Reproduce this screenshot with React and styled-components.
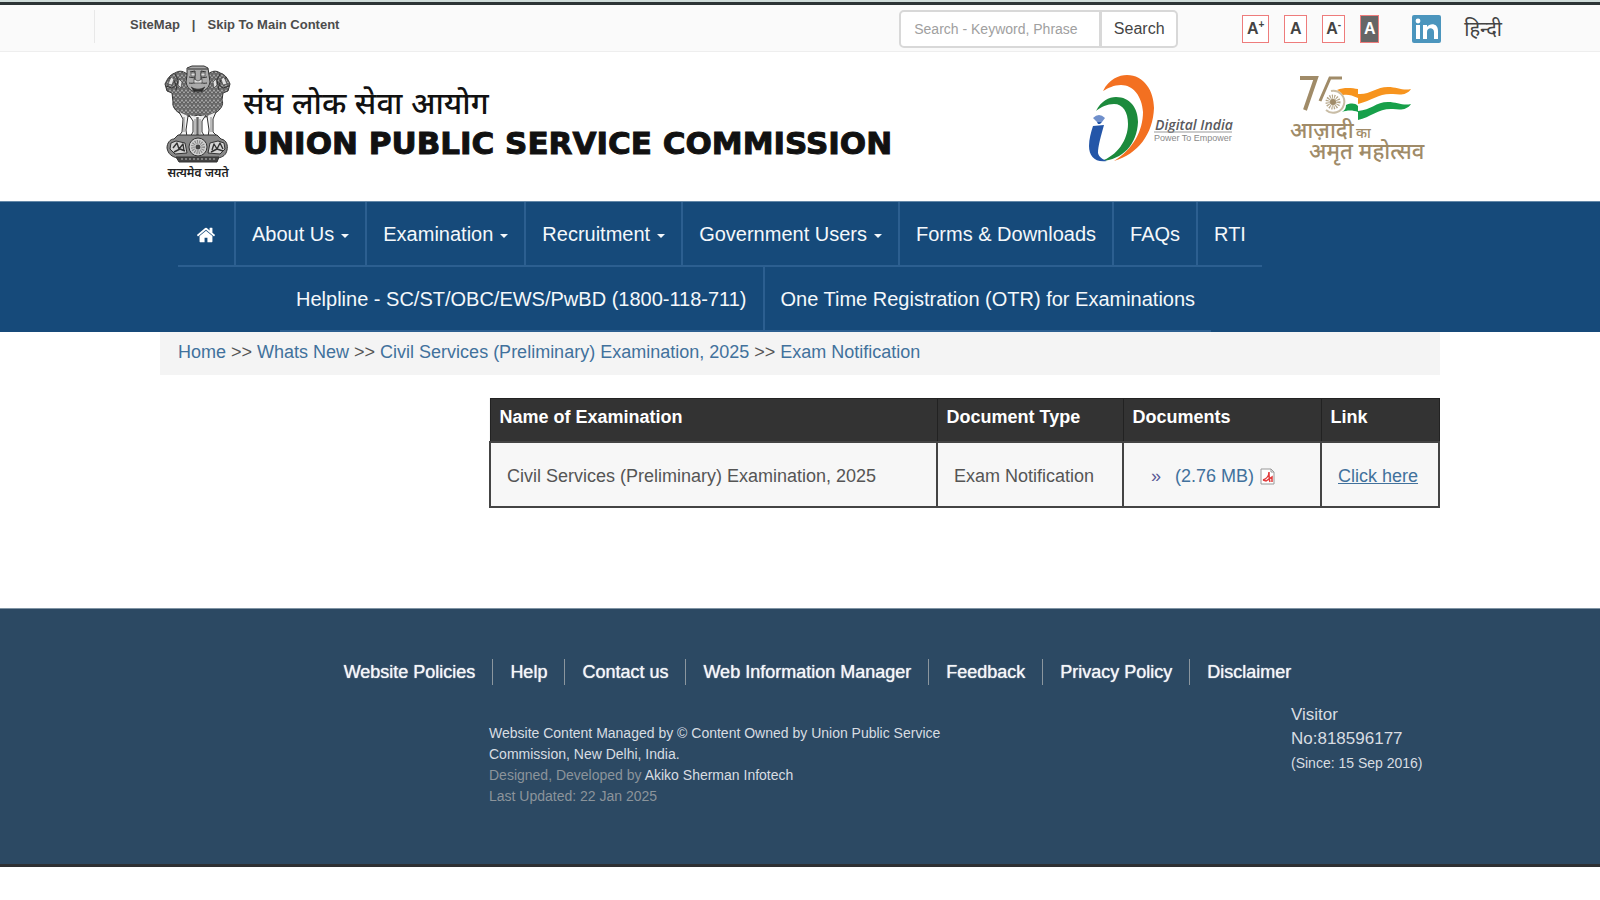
import { useState } from "react";
import styled, { createGlobalStyle } from "styled-components";

const menu = [
    { label: 'About Us', dropdown: true },
    { label: 'Examination', dropdown: true },
    { label: 'Recruitment', dropdown: true },
    { label: 'Government Users', dropdown: true },
    { label: 'Forms & Downloads' },
    { label: 'FAQs' },
    { label: 'RTI' },
];

const subMenu = [
    'Helpline - SC/ST/OBC/EWS/PwBD (1800-118-711)',
    'One Time Registration (OTR) for Examinations',
];

const crumbs = ['Home', 'Whats New', 'Civil Services (Preliminary) Examination, 2025', 'Exam Notification'];

const footerLinks = ['Website Policies', 'Help', 'Contact us', 'Web Information Manager', 'Feedback', 'Privacy Policy', 'Disclaimer'];

const Emblem = () => (
    <svg width="67" height="115" viewBox="0 0 67 115" role="img" aria-label="State Emblem of India">
        <defs>
            <pattern id="fur" width="4" height="5" patternUnits="userSpaceOnUse">
                <rect width="4" height="5" fill="#a2a2a2" />
                <path d="M0 0l2 3 2-3M2 3v2M0 5l1-2M4 5l-1-2" stroke="#333" strokeWidth=".7" fill="none" />
            </pattern>
        </defs>
        <g stroke="#333" strokeWidth="1" strokeLinejoin="round">
            <path d="M23 9C18 5 14 6 11 8C5 10 3 15 1 19L3 26L8 28L9 37C8 41 11 46 17 49L27 52L34 50L42 52L51 48C57 45 60 39 58 35L59 28L64 26L66 19C64 14 61 9 56 8C52 5 48 6 44 9Z" fill="url(#fur)" />
            <path d="M23 3L28 1H40L44 3L45 10L46 17C45 23 41 27 34 27C27 27 23 23 22 17L23 10Z" fill="#aaa" />
            <path d="M24 4h20M26 7l5-1M37 6l5 1M25 12l6 1M37 13l6-1M31 6v9l3 2 3-2V6M25 18c5 1 6-1 9-1s4 2 9 1M27 22c4 3 10 3 14 0" fill="none" />
            <path d="M30 14l4 2 4-2v4h-8zM27 8h4v3h-4zM37 8h4v3h-4z" fill="#ddd" strokeWidth=".6" />
            <path d="M28 23q6 4 12 0l-2 3h-8z" fill="#222" />
            <path d="M5 13l5 2 2 5-4 3-6-2M11 9l3 6-2 10M62 13l-5 2-2 5 4 3 6-2M56 9l-3 6 2 10" fill="none" />
            <path d="M7 12l3 2-2 6-4-1zM15 14l3 3-1 6-3-3zM60 12l-3 2 2 6 4-1zM52 14l-3 3 1 6 3-3z" fill="#e2e2e2" strokeWidth=".6" />
            <path d="M15 47L19 54L18 67L14 72H23L22 65L24 51M25 50L29 56V67L26 72H33V52M34 52V72H41L38 67V56L42 50M43 51L45 65L44 72H54L49 67V54L52 47" fill="#eee" />
            <path d="M20 52v15M31 54v15M36 54v15M47 52v15" stroke="#888" fill="none" />
            <path d="M14 70h39l4 4c6 1 7 7 6 11-1 5-4 7-9 8H14C8 92 4 89 3 83c0-5 3-9 7-9z" fill="#888" />
            <path d="M7 78l5-2 9 2 2 10-12 1-5-5zM60 78l-6-2-8 2-2 10 12 1 5-5z" fill="#d4d4d4" />
            <path d="M9 83l4-5 2 6 4-5 1 7M48 85l2-6 3 5 3-6 3 6M10 87l6-3 5 2M47 87l6-3 6 2" fill="none" strokeWidth="1.4" />
            <circle cx="34" cy="82" r="9" fill="#d0d0d0" />
            <circle cx="34" cy="82" r="5" fill="none" strokeDasharray="1 1" strokeWidth="4" stroke="#888" />
            <circle cx="34" cy="82" r="2" fill="#444" />
            <path d="M12 92h43l-2 5H15z" fill="#444" />
            <path d="M17 94h34" stroke="#bbb" strokeDasharray="2 2" />
        </g>
        <text x="34" y="112" textAnchor="middle" fontSize="12" fontWeight="600" fill="#222">सत्यमेव जयते</text>
    </svg>
);

const DigitalIndia = () => (
    <svg width="145" height="90" viewBox="0 0 145 90" role="img" aria-label="Digital India">
        <path d="M14 17C20 5 30 1 38 1C55 1 65 17 65 34C64 60 49 80 25 87C44 75 54 57 54 38C53 22 44 11 32 11C25 11 19 14 14 17Z" fill="#f37021" />
        <path d="M7 37C12 27 20 23 27 23C41 23 49 34 49 48C48 70 34 86 12 87C28 82 39 66 39 50C39 38 34 30 25 30C18 30 12 33 7 37Z" fill="#1c8a3c" />
        <path d="M4 52L15 51C12 62 9 72 9 79C10 83 13 85 18 87C6 89 0 82 0 72C0 65 2 58 4 52Z" fill="#2456a8" />
        <path d="M4 44Q10 38 16 44L13 48H8Z" fill="#6f8fcb" />
        <path d="M8 48h5l-2 2H9Z" fill="#2456a8" />
        <text x="66" y="56" fontSize="14" fontWeight="600" fontStyle="italic" fontFamily="Open Sans, sans-serif" fill="#5a5a5e">Digital India</text>
        <path d="M65 58H143" stroke="#999" strokeWidth="1" />
        <text x="65" y="67" fontSize="9" fontFamily="Liberation Sans, sans-serif" fill="#8a8a8a">Power To Empower</text>
    </svg>
);

const AzadiLogo = () => (
    <svg width="140" height="96" viewBox="0 0 140 96" role="img" aria-label="Azadi Ka Amrit Mahotsav">
        <g fill="none" stroke="#a08b68">
            <path d="M11 4H27L16 36" strokeWidth="4" />
            <path d="M53 4H41L31 27" strokeWidth="3" />
            <path d="M42 17A11 11 0 1 1 37 36" strokeWidth="2" stroke="#c9bda6" />
            <circle cx="44" cy="28" r="5" strokeWidth="5" strokeDasharray="1 1" stroke="#b5a689" />
            <circle cx="44" cy="28" r="3" fill="#a08b68" stroke="none" />
        </g>
        <path d="M48 16C55 13 63 14 69 15V24C63 21 58 20 54 21C52 18 50 17 48 16Z" fill="#f7941e" />
        <path d="M69 20C81 21 87 13 99 13C108 13 114 17 122 15C118 21 112 21 104 20C90 19 84 26 69 30Z" fill="#f7941e" />
        <path d="M57 31C62 29 66 29 69 32V38C64 36 58 36 53 38C56 36 57 34 57 31Z" fill="#17a04a" />
        <path d="M69 37C82 36 87 28 99 28C108 28 114 32 122 30C118 36 112 36 104 35C90 34 82 43 69 46Z" fill="#17a04a" />
        <g fill="#a08b68" fontWeight="500">
            <text x="1" y="64" fontSize="22">आज़ादी</text>
            <text x="67" y="64" fontSize="14">का</text>
            <text x="20" y="85" fontSize="22">अमृत महोत्सव</text>
        </g>
    </svg>
);

const HomeIcon = () => (
    <svg width="20" height="20" viewBox="0 0 1792 1792" fill="#fff" aria-hidden="true">
        <path d="M1472 992v480q0 26-19 45t-45 19h-384v-384h-256v384h-384q-26 0-45-19t-19-45v-480q0-1 .5-3t.5-3l575-474 575 474q1 2 1 6zm223-69l-62 74q-8 9-21 11h-3q-13 0-21-7l-692-577-692 577q-12 8-24 7-13-2-21-11l-62-74q-8-10-7-23.500t11-21.500l719-599q32-26 76-26t76 26l244 204v-195q0-14 9-23t23-9h192q14 0 23 9t9 23v408l219 182q10 8 11 21.500t-7 23.500z" />
    </svg>
);

const LinkedIn = () => (
    <svg width="29" height="28" viewBox="0 0 29 28" aria-hidden="true">
        <rect width="29" height="28" rx="2" fill="#4b95bd" />
        <path d="M4 10H8V24H4Z M11 10H15V12C18 8 26 8 26 16V24H22V17C22 12 15 12 15 17V24H11Z" fill="#fff" />
        <circle cx="6" cy="6" r="2.400" fill="#fff" />
    </svg>
);

const PdfIcon = () => (
    <svg width="15" height="17" viewBox="0 0 15 17" aria-hidden="true">
        <path d="M1 1H11L14 4V16H1Z" fill="#fff" stroke="#999" />
        <path d="M11 1V4H14" fill="none" stroke="#999" />
        <path d="M3 12C6 11 9 8 9 4M9 4C9 8 9 11 10 14M3 12L6 13L12 9V14" fill="none" stroke="#e23b3b" strokeWidth="1.5" />
    </svg>
);

const App = () => {
    const [keyword, setKeyword] = useState('');

    return (
        <>
            <GlobalStyle />
            <TopBar>
                <SkipLinks>
                    <a href="#sitemap">SiteMap</a>
                    <span>|</span>
                    <a href="#main">Skip To Main Content</a>
                </SkipLinks>
                <Tools>
                    <SearchForm onSubmit={(e) => e.preventDefault()}>
                        <input
                            type="text"
                            aria-label="Search"
                            placeholder="Search - Keyword, Phrase"
                            value={keyword}
                            onChange={(e) => setKeyword(e.target.value)}
                        />
                        <button type="submit">Search</button>
                    </SearchForm>
                    <TextSizes>
                        <SizeButton $width={27} aria-label="Increase text size">A<sup>+</sup></SizeButton>
                        <SizeButton $width={23} aria-label="Normal text size">A</SizeButton>
                        <SizeButton $width={23} aria-label="Decrease text size">A<sup>-</sup></SizeButton>
                        <SizeButton $width={19} $dark aria-label="High contrast">A</SizeButton>
                    </TextSizes>
                    <SocialLink href="#linkedin" aria-label="LinkedIn"><LinkedIn /></SocialLink>
                    <Language href="#hi" lang="hi">हिन्दी</Language>
                </Tools>
            </TopBar>

            <Header>
                <Brand href="#home">
                    <Emblem />
                    <div>
                        <HindiName lang="hi">संघ लोक सेवा आयोग</HindiName>
                        <EnglishName>UNION PUBLIC SERVICE COMMISSION</EnglishName>
                    </div>
                </Brand>
                <Partners>
                    <DigitalIndia />
                    <AzadiLogo />
                </Partners>
            </Header>

            <Nav>
                <Container>
                    <MenuRow>
                        <li><HomeLink href="#home" aria-label="Home"><HomeIcon /></HomeLink></li>
                        {menu.map((item) => (
                            <li key={item.label}>
                                <MenuLink href="#menu">{item.label}{item.dropdown && <Caret />}</MenuLink>
                            </li>
                        ))}
                    </MenuRow>
                    <MenuRow $sub>
                        {subMenu.map((label) => <li key={label}><MenuLink href="#menu">{label}</MenuLink></li>)}
                    </MenuRow>
                </Container>
            </Nav>

            <Main id="main">
                <Breadcrumb aria-label="Breadcrumb">
                    {crumbs.map((crumb, i) => (
                        <span key={crumb}>{i > 0 && ' >> '}<a href="#crumb">{crumb}</a></span>
                    ))}
                </Breadcrumb>
                <ExamTable>
                    <colgroup>
                        <col />
                        <col width="186" />
                        <col width="198" />
                        <col width="118" />
                    </colgroup>
                    <thead>
                        <tr>
                            <th>Name of Examination</th>
                            <th>Document Type</th>
                            <th>Documents</th>
                            <th>Link</th>
                        </tr>
                    </thead>
                    <tbody>
                        <tr>
                            <td>Civil Services (Preliminary) Examination, 2025</td>
                            <td>Exam Notification</td>
                            <td>
                                <Document><Marker>»</Marker><a href="#pdf">(2.76 MB) <PdfIcon /></a></Document>
                            </td>
                            <td><ClickHere href="#apply">Click here</ClickHere></td>
                        </tr>
                    </tbody>
                </ExamTable>
            </Main>

            <Footer>
                <FooterLinks>
                    {footerLinks.map((label) => <li key={label}><a href="#footer">{label}</a></li>)}
                </FooterLinks>
                <FooterInfo>
                    <Credits>
                        <p>Website Content Managed by © Content Owned by Union Public Service Commission, New Delhi, India.</p>
                        <Muted>Designed, Developed by <a href="#developer">Akiko Sherman Infotech</a></Muted>
                        <Muted>Last Updated: 22 Jan 2025</Muted>
                    </Credits>
                    <Visitors>
                        <p>Visitor<br />No:818596177</p>
                        <small>(Since: 15 Sep 2016)</small>
                    </Visitors>
                </FooterInfo>
            </Footer>
        </>
    )
}

const GlobalStyle = createGlobalStyle`
    *{
        box-sizing: border-box;
    }
    body{
        margin: 0;
        background: #fff;
        color: #555;
        font-family: "Liberation Sans", "Noto Sans", Arial, sans-serif;
        font-size: 18px;
    }
    a{
        color: #41719c;
        text-decoration: none;
    }
    p, ul{
        margin: 0;
        padding: 0;
    }
    ul{
        list-style: none;
    }
    svg{
        flex-shrink: 0;
    }
`;

const Container = styled.div`
    max-width: 1280px;
    margin: 0 auto;
`;

const TopBar = styled.div`
    display: flex;
    justify-content: space-between;
    align-items: flex-start;
    padding: 8px 98px 0 94px;
    height: 52px;
    background: #fafafa;
    border-top: 2px solid #cfdcd9;
    border-bottom: 1px solid #eee;
    box-shadow: inset 0 3px #2c3435;
`;

const SkipLinks = styled.div`
    display: flex;
    gap: 12px;
    height: 33px;
    padding: 7px 0 0 35px;
    border-left: 1px solid #e8e8e8;
    font-size: 13px;
    line-height: 16px;
    font-weight: bold;
    color: #4c4c4c;
    a{
        color: #4c4c4c;
    }
`;

const Tools = styled.div`
    display: flex;
    align-items: center;
`;

const SearchForm = styled.form`
    display: flex;
    margin-right: 64px;
    input{
        width: 202px;
        height: 38px;
        padding: 0 13px;
        border: 2px solid #d8d8d8;
        border-radius: 5px 0 0 5px;
        background: #fff;
        font: 14px "Liberation Sans", sans-serif;
        color: #555;
    }
    input::placeholder{
        color: #a0a0a0;
    }
    button{
        width: 78px;
        height: 38px;
        margin-left: -1px;
        padding: 0;
        border: 2px solid #d8d8d8;
        border-radius: 0 5px 5px 0;
        background: #fff;
        font: 16px "Liberation Sans", sans-serif;
        color: #444;
    }
`;

const TextSizes = styled.div`
    display: flex;
    gap: 15px;
    margin-right: 33px;
`;

const SizeButton = styled.button`
    width: ${(props) => props.$width}px;
    height: 28px;
    padding: 0;
    border: 1px solid #ee7c7c;
    background: ${(props) => (props.$dark ? '#666' : '#fff')};
    color: ${(props) => (props.$dark ? '#fff' : '#444')};
    font: bold 16px "Liberation Sans", sans-serif;
    line-height: 24px;
    sup{
        font-size: 10px;
        line-height: 1px;
    }
`;

const SocialLink = styled.a`
    display: flex;
    margin-right: 23px;
`;

const Language = styled.a`
    font-size: 20px;
    line-height: 24px;
    color: #444;
`;

const Header = styled.header`
    display: flex;
    justify-content: space-between;
    align-items: flex-start;
    max-width: 1280px;
    margin: 0 auto;
    padding: 13px 11px 21px 4px;
`;

const Brand = styled.a`
    display: flex;
    gap: 12px;
    color: #111;
`;

const HindiName = styled.div`
    margin-top: 17px;
    font-size: 31px;
    line-height: 44px;
    font-weight: 500;
`;

const EnglishName = styled.div`
    font-family: "DejaVu Sans", sans-serif;
    font-size: 31px;
    line-height: 34px;
    font-weight: bold;
    -webkit-text-stroke: 1px #111;
`;

const Partners = styled.div`
    display: flex;
    gap: 55px;
    padding-top: 9px;
`;

const Nav = styled.nav`
    background: #164a7a;
    border-top: 1px solid #6488a8;
`;

const MenuRow = styled.ul`
    display: flex;
    width: max-content;
    margin-left: ${(props) => (props.$sub ? '120px' : '18px')};
    border-bottom: 2px solid #2c5f90;
    li + li{
        border-left: 2px solid #2c5f90;
    }
`;

const MenuLink = styled.a`
    display: flex;
    align-items: center;
    height: 63px;
    padding: 2px 16px 0;
    font-size: 20px;
    color: #f4f8fb;
`;

const HomeLink = styled(MenuLink)`
    padding: 2px 18px 0;
`;

const Caret = styled.span`
    margin: 2px 0 0 7px;
    border-top: 4px solid #f4f8fb;
    border-left: 4px solid transparent;
    border-right: 4px solid transparent;
`;

const Main = styled.main`
    max-width: 1280px;
    margin: 0 auto;
    padding-bottom: 100px;
`;

const Breadcrumb = styled.nav`
    padding: 8px 18px 11px;
    background: #f4f4f4;
    line-height: 24px;
    white-space: pre-wrap;
`;

const ExamTable = styled.table`
    width: 951px;
    margin: 23px 0 0 auto;
    border-collapse: collapse;
    table-layout: fixed;
    background: #f7f7f7;
    th{
        height: 43px;
        padding: 0 9px 4px;
        background: #333;
        border: 1px solid #222;
        color: #fff;
        text-align: left;
    }
    td{
        height: 65px;
        padding: 4px 16px 0;
        border: 2px solid #444;
    }
`;

const Document = styled.div`
    display: flex;
    gap: 14px;
    padding-left: 11px;
    a{
        display: flex;
        align-items: center;
        gap: 6px;
    }
`;

const Marker = styled.span`
    color: #5b5b96;
`;

const ClickHere = styled.a`
    text-decoration: underline;
    white-space: nowrap;
`;

const Footer = styled.footer`
    min-height: 259px;
    padding-top: 50px;
    background: #2c4963;
    border-top: 1px solid #8094a4;
    border-bottom: 3px solid #2e3033;
    color: #d8dde2;
`;

const FooterLinks = styled.ul`
    display: flex;
    justify-content: center;
    padding-left: 35px;
    li{
        padding: 0 17px;
        line-height: 26px;
    }
    li + li{
        border-left: 1px solid #8b969e;
    }
    a{
        color: #f4f6f8;
        text-shadow: 0 0 1px #f4f6f8;
    }
`;

const FooterInfo = styled.div`
    display: flex;
    justify-content: space-between;
    max-width: 1280px;
    margin: 0 auto;
    padding: 18px 0 0 329px;
`;

const Credits = styled.div`
    width: 460px;
    padding-top: 20px;
    font-size: 14px;
    line-height: 21px;
    a{
        color: #d8dde2;
    }
`;

const Muted = styled.p`
    color: #8b949b;
`;

const Visitors = styled.div`
    width: 149px;
    font-size: 17px;
    line-height: 24px;
    small{
        font-size: 14px;
    }
`;

export default App
